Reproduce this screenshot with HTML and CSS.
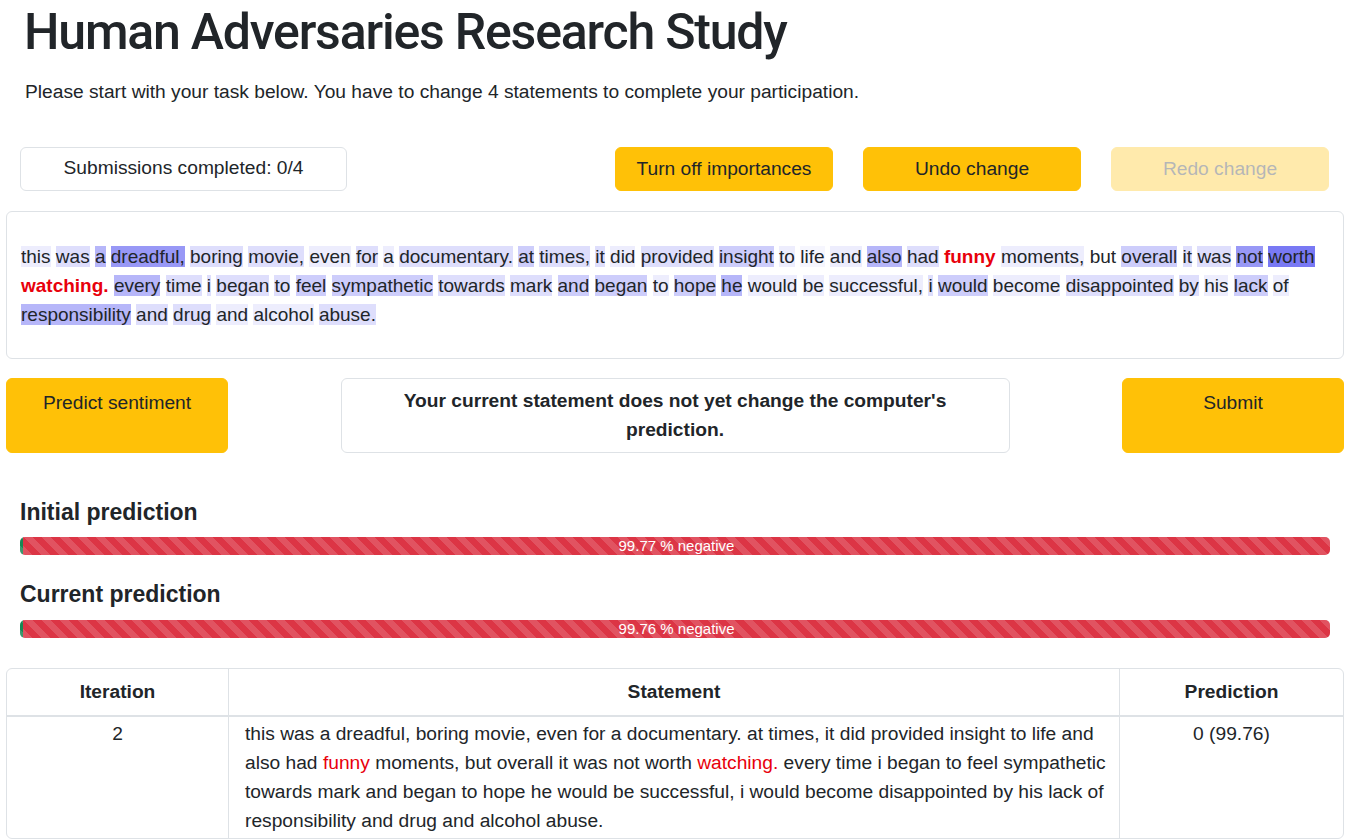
FILE: index.html
```html
<!DOCTYPE html>
<html lang="en">
<head>
  <meta charset="UTF-8" />
  <meta name="viewport" content="width=device-width, initial-scale=1" />
  <title>Human Adversaries Research Study</title>
  <link rel="stylesheet" href="styles.css">
</head>
<body>
  <h1 class="title">Human Adversaries Research Study</h1>
  <p class="intro">Please start with your task below. You have to change 4 statements to complete your participation.</p>

  <div class="toolbar">
    <div class="counter">Submissions completed: 0/4</div>
    <div class="actions">
      <button class="btn">Turn off importances</button>
      <button class="btn">Undo change</button>
      <button class="btn" disabled>Redo change</button>
    </div>
  </div>

  <div class="statement">
    <span class="w1">this</span> <span class="w2">was</span> <span class="w4">a</span> <span class="w5">dreadful,</span> <span class="w2">boring</span> <span class="w2">movie,</span> <span class="w1">even</span> <span class="w2">for</span> <span class="w1">a</span> <span class="w2">documentary.</span> <span class="w3">at</span> <span class="w2">times,</span> <span class="w2">it</span> <span class="w1">did</span> <span class="w2">provided</span> <span class="w3">insight</span> <span class="w1">to</span> <span class="w0">life</span> <span class="w1">and</span> <span class="w4">also</span> <span class="w2">had</span> <span class="changed">funny</span> <span class="w1">moments,</span> <span>but</span> <span class="w3">overall</span> <span class="w2">it</span> <span class="w2">was</span> <span class="w5">not</span> <span class="w6">worth</span>
    <span class="changed">watching.</span> <span class="w4">every</span> <span class="w2">time</span> <span class="w2">i</span> <span class="w2">began</span> <span class="w2">to</span> <span class="w3">feel</span> <span class="w3">sympathetic</span> <span class="w2">towards</span> <span class="w2">mark</span> <span class="w3">and</span> <span class="w3">began</span> <span class="w1">to</span> <span class="w3">hope</span> <span class="w4">he</span> <span class="w1">would</span> <span class="w1">be</span> <span class="w1">successful,</span> <span class="w2">i</span> <span class="w3">would</span> <span class="w1">become</span> <span class="w2">disappointed</span> <span class="w2">by</span> <span class="w1">his</span> <span class="w3">lack</span> <span class="w1">of</span>
    <span class="w4">responsibility</span> <span class="w2">and</span> <span class="w2">drug</span> <span class="w1">and</span> <span class="w1">alcohol</span> <span class="w2">abuse.</span>
  </div>

  <div class="controls">
    <button class="btn btn-tall">Predict sentiment</button>
    <div class="message">Your current statement does not yet change the computer's prediction.</div>
    <button class="btn btn-tall">Submit</button>
  </div>

  <div class="predictions">
    <h4>Initial prediction</h4>
    <div class="progress">
      <div class="bar bar-pos" style="width: 0.23%"></div>
      <div class="bar bar-neg" style="width: 99.77%">99.77 % negative</div>
    </div>
    <h4>Current prediction</h4>
    <div class="progress">
      <div class="bar bar-pos" style="width: 0.24%"></div>
      <div class="bar bar-neg" style="width: 99.76%">99.76 % negative</div>
    </div>
  </div>

  <div class="history">
    <table>
      <thead>
        <tr>
          <th class="col-iter">Iteration</th>
          <th>Statement</th>
          <th class="col-pred">Prediction</th>
        </tr>
      </thead>
      <tbody>
        <tr>
          <td class="center">2</td>
          <td class="text-cell">this was a dreadful, boring movie, even for a documentary. at times, it did provided insight to life and also had <span class="red">funny</span> moments, but overall it was not worth <span class="red">watching.</span> every time i began to feel sympathetic towards mark and began to hope he would be successful, i would become disappointed by his lack of responsibility and drug and alcohol abuse.</td>
          <td class="center">0 (99.76)</td>
        </tr>
      </tbody>
    </table>
  </div>
</body>
</html>
```

FILE: styles.css
```css
body {
  margin: 0;
  font-family: 'Liberation Sans', Arial, sans-serif;
  font-size: 19.2px;
  line-height: 1.5;
  color: #212529;
  background: #fff;
}

.title {
  margin: 0;
  padding: 2px 0 0 24px;
  font-family: Roboto, 'Liberation Sans', sans-serif;
  font-size: 50px;
  font-weight: 500;
  line-height: 1.2;
  letter-spacing: -1.2px;
}

.intro {
  margin: 16px 0 0 25px;
}

.toolbar {
  display: flex;
  align-items: center;
  margin: 40px 27px 0 20px;
}

.counter {
  width: 325px;
  height: 42px;
  border: 1px solid #dee2e6;
  border-radius: 6px;
  display: flex;
  align-items: center;
  justify-content: center;
}

.actions {
  margin-left: auto;
  display: flex;
  gap: 30px;
}

.btn {
  font-family: inherit;
  font-size: 19.2px;
  color: #212529;
  background-color: #ffc107;
  border: 1px solid #ffc107;
  border-radius: 6px;
  width: 218px;
  height: 44px;
  padding: 0;
  cursor: pointer;
}

.btn:disabled {
  opacity: 0.33;
  cursor: default;
}

.statement {
  margin: 20px 12px 0 6px;
  padding: 30px 14px 29px 14px;
  border: 1px solid #dee2e6;
  border-radius: 6px;
  font-size: 19px;
  line-height: 29px;
}

.w0 { background: rgba(20, 20, 235, 0.04); }
.w1 { background: rgba(20, 20, 235, 0.08); }
.w2 { background: rgba(20, 20, 235, 0.14); }
.w3 { background: rgba(20, 20, 235, 0.21); }
.w4 { background: rgba(20, 20, 235, 0.31); }
.w5 { background: rgba(20, 20, 235, 0.44); }
.w6 { background: rgba(20, 20, 235, 0.57); }

.changed {
  color: #e8000b;
  font-weight: bold;
}

.controls {
  display: flex;
  justify-content: space-between;
  margin: 19px 12px 0 6px;
}

.btn-tall {
  width: 222px;
  height: 75px;
  display: flex;
  justify-content: center;
  padding-top: 11px;
  line-height: 26px;
}

.message {
  width: 569px;
  height: 73px;
  border: 1px solid #dee2e6;
  border-radius: 6px;
  padding: 0 49px;
  display: flex;
  align-items: center;
  justify-content: center;
  text-align: center;
  font-weight: bold;
  line-height: 29px;
}

.predictions {
  margin: 46px 26px 0 20px;
}

.predictions h4 {
  margin: 0;
  font-size: 23px;
  font-weight: bold;
  line-height: 1.2;
}

.progress {
  display: flex;
  height: 18px;
  margin: 11px 0 26px;
  border-radius: 5px;
  overflow: hidden;
  background: #e9ecef;
}

.bar {
  font-size: 15px;
  line-height: 18px;
  color: #fff;
  text-align: center;
  white-space: nowrap;
  background-image: linear-gradient(45deg, rgba(255,255,255,.15) 25%, transparent 25%, transparent 50%, rgba(255,255,255,.15) 50%, rgba(255,255,255,.15) 75%, transparent 75%, transparent);
  background-size: 18px 18px;
}

.bar-pos {
  background-color: #198754;
}

.bar-neg {
  background-color: #dc3545;
}

.history {
  margin: 30px 12px 0 6px;
  border: 1px solid #dee2e6;
  border-radius: 6px;
  overflow: hidden;
}

table {
  width: 100%;
  border-collapse: collapse;
}

th {
  height: 46px;
  padding: 0 16px;
  font-weight: bold;
  text-align: center;
  border-bottom: 2px solid #dee2e6;
  border-right: 1px solid #dee2e6;
}

td {
  vertical-align: top;
  padding: 2px 16px 3px;
  line-height: 29px;
  border-right: 1px solid #dee2e6;
}

td.text-cell {
  padding-right: 4px;
}

th:last-child,
td:last-child {
  border-right: none;
}

.col-iter {
  width: 189px;
}

.col-pred {
  width: 191px;
}

.center {
  text-align: center;
}

.red {
  color: #e8000b;
}
```
